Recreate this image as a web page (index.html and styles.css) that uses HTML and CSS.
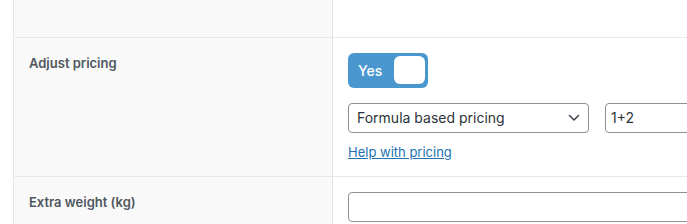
FILE: index.html
```html
<!DOCTYPE html>
<html lang="en">
<head>
    <meta charset="UTF-8">
    <title>Shipping settings</title>
    <link rel="stylesheet" href="styles.css">
</head>
<body>
    <div class="wrap">
        <table class="form-table">
            <tr class="row-top">
                <th></th>
                <td></td>
            </tr>
            <tr>
                <th>Adjust pricing</th>
                <td>
                    <label class="toggle">
                        <span class="toggle-text">Yes</span>
                        <span class="toggle-knob"></span>
                    </label>
                    <div class="pricing-fields">
                        <div class="select">
                            <span>Formula based pricing</span>
                            <svg class="chevron" viewBox="0 0 12 8" width="12" height="8">
                                <path d="M1.5 1.5 L6 6 L10.5 1.5" fill="none" stroke="#3c434a" stroke-width="1.5" stroke-linecap="round" stroke-linejoin="round"/>
                            </svg>
                        </div>
                        <input class="input formula" type="text" value="1+2">
                    </div>
                    <a class="help" href="#">Help with pricing</a>
                </td>
            </tr>
            <tr>
                <th>Extra weight (kg)</th>
                <td>
                    <input class="input wide" type="text">
                </td>
            </tr>
        </table>
    </div>
</body>
</html>
```

FILE: styles.css
```css
* {
    margin: 0;
    padding: 0;
    box-sizing: border-box;
}

body {
    font-family: Inter, "Noto Sans", Arial, sans-serif;
    background: #fff;
    color: #3c434a;
    overflow: hidden;
}

.wrap {
    padding-left: 13px;
    width: 900px;
}

.form-table {
    border-collapse: collapse;
    width: 100%;
    border-left: 1px solid #e5e5e5;
}

.form-table th {
    width: 319px;
    background: #f9f9f9;
    border-right: 1px solid #e2e2e2;
    border-bottom: 1px solid #e8e8e8;
    text-align: left;
    vertical-align: top;
    padding: 16px 15px 12px;
    font-size: 13px;
    font-weight: 600;
    line-height: 18px;
    color: #50575e;
}

.form-table td {
    border-bottom: 1px solid #e8e8e8;
    vertical-align: top;
    padding: 15px 15px 15px;
}

.row-top th,
.row-top td {
    height: 37px;
    padding: 0;
}

.toggle {
    display: flex;
    align-items: center;
    justify-content: space-between;
    width: 80px;
    height: 35px;
    padding: 0 3px 0 10px;
    background: #4a97d0;
    border-radius: 6px;
    cursor: pointer;
}

.toggle-text {
    color: #fff;
    font-size: 14px;
    font-weight: 500;
}

.toggle-knob {
    width: 31px;
    height: 28px;
    background: #fff;
    border-radius: 6px;
}

.pricing-fields {
    display: flex;
    gap: 16px;
    margin-top: 15px;
}

.select,
.input {
    height: 30px;
    border: 1px solid #8c8f94;
    border-radius: 4px;
    background: #fff;
    font-family: inherit;
    font-size: 14px;
    color: #2c3338;
}

.select {
    width: 241px;
    display: flex;
    align-items: center;
    justify-content: space-between;
    padding: 0 8px 0 8px;
}

.chevron {
    width: 12px;
    height: 8px;
}

.input {
    padding: 0 5px;
    outline: none;
}

.formula {
    width: 200px;
}

.wide {
    width: 420px;
    display: block;
}

.help {
    display: inline-block;
    margin-top: 10px;
    font-size: 13px;
    line-height: 18px;
    color: #2271b1;
    text-decoration: underline;
}
```
